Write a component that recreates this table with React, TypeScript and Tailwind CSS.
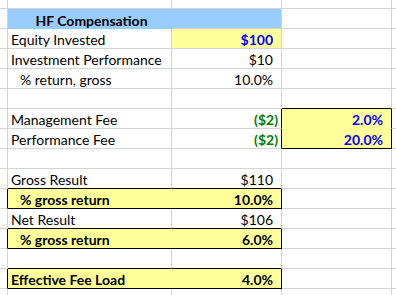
type Row = {
  label?: string
  value?: string
  fee?: string
  kind?: 'head' | 'input' | 'fee' | 'box' | 'plain'
  indent?: boolean
  bottomBlack?: boolean
  feeTopBlack?: boolean
  feeBottom?: 'black' | 'yellow'
}

const GRID = 'border-[#d4d4d4]'

const ROWS: Row[] = [
  { kind: 'head', label: 'HF Compensation' },
  { kind: 'input', label: 'Equity Invested', value: '$100' },
  { label: 'Investment Performance', value: '$10' },
  { label: '% return, gross', value: '10.0%', indent: true },
  { feeTopBlack: true },
  { kind: 'fee', label: 'Management Fee', value: '($2)', fee: '2.0%', feeBottom: 'yellow' },
  { kind: 'fee', label: 'Performance Fee', value: '($2)', fee: '20.0%', feeBottom: 'black' },
  {},
  { label: 'Gross Result', value: '$110', bottomBlack: true },
  { kind: 'box', label: '% gross return', value: '10.0%', indent: true },
  { label: 'Net Result', value: '$106', bottomBlack: true },
  { kind: 'box', label: '% gross return', value: '6.0%', indent: true },
  { bottomBlack: true },
  { kind: 'box', label: 'Effective Fee Load', value: '4.0%' },
]

function SheetRow({ row }: { row: Row }) {
  const box = row.kind === 'box'
  const head = row.kind === 'head'
  const fee = row.kind === 'fee'
  const bBottom = box || row.bottomBlack ? 'border-b-black' : ''

  const bCls = head
    ? 'bg-[#99ccff] justify-center font-bold'
    : box
      ? `bg-[#ffff99] font-bold border-b ${bBottom}`
      : `border-r border-b ${bBottom}`

  const cCls = head
    ? 'bg-[#99ccff] border-r border-b'
    : box
      ? 'bg-[#ffff99] font-bold justify-end border-r border-b border-r-black border-b-black pr-[8px]'
      : row.kind === 'input'
        ? 'bg-[#ffff99] font-bold text-[#0000ff] justify-end border-r border-b pr-[8px]'
        : fee
          ? 'font-bold text-[#008000] justify-end border-r border-b border-r-black pr-[3px]'
          : `justify-end border-r border-b pr-[8px] ${bBottom}`

  const dCls = fee
    ? `bg-[#ffff99] font-bold text-[#0000ff] justify-end border-r border-b border-r-black pr-[8px] ${
        row.feeBottom === 'black' ? 'border-b-black' : 'border-b-[#ffff99]'
      }`
    : `border-r border-b ${row.feeTopBlack ? 'border-b-black' : ''}`

  return (
    <div className="flex h-[20px] whitespace-nowrap">
      <div className={`w-[8px] shrink-0 border-r border-b ${GRID} ${box ? 'border-r-black' : ''}`} />
      <div className={`w-[164px] shrink-0 flex items-center pt-[3px] ${GRID} ${bCls} ${row.indent ? 'pl-[12px]' : 'pl-[3px]'} ${head ? 'pl-0' : ''}`}>
        {row.label}
      </div>
      <div className={`w-[110px] shrink-0 flex items-center pt-[3px] ${GRID} ${cCls}`}>{row.value}</div>
      <div className={`w-[110px] shrink-0 flex items-center pt-[3px] ${GRID} ${dCls}`}>{row.fee}</div>
      <div className={`flex-1 border-b ${GRID}`} />
    </div>
  )
}

export default function App() {
  return (
    <div className="w-[396px] h-[295px] overflow-hidden bg-white text-black text-[14px] leading-none font-['Lato','Liberation_Sans',sans-serif]">
      {/* partial top row */}
      <div className="flex h-[9px]">
        <div className={`w-[8px] shrink-0 border-r border-b ${GRID}`} />
        <div className={`w-[164px] shrink-0 border-r border-b ${GRID}`} />
        <div className={`w-[110px] shrink-0 border-r border-b ${GRID}`} />
        <div className={`w-[110px] shrink-0 border-r border-b ${GRID}`} />
        <div className={`flex-1 border-b ${GRID}`} />
      </div>

      {ROWS.map((row, i) => (
        <SheetRow key={i} row={row} />
      ))}

      {/* partial bottom row */}
      <div className="flex h-[7px]">
        <div className={`w-[8px] shrink-0 border-r ${GRID}`} />
        <div className={`w-[164px] shrink-0 border-r ${GRID}`} />
        <div className={`w-[110px] shrink-0 border-r ${GRID}`} />
        <div className={`w-[110px] shrink-0 border-r ${GRID}`} />
        <div className="flex-1" />
      </div>
    </div>
  )
}
